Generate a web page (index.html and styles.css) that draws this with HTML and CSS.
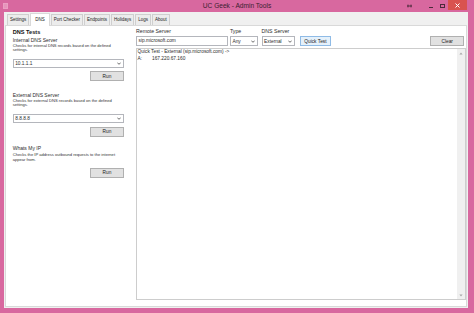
FILE: index.html
```html
<!DOCTYPE html>
<html lang="en">
<head>
    <meta charset="UTF-8">
    <title>UC Geek - Admin Tools</title>
    <link rel="stylesheet" href="styles.css">
</head>
<body>
<div class="window">
    <div class="titlebar">
        <span class="app-icon"></span>
        <span class="title">UC Geek - Admin Tools</span>
        <div class="controls">
            <span class="ctl pin">
                <svg width="5" height="4" viewBox="0 0 5 4"><path d="M0 2h5M1 0.6v2.8M4 0.6v2.8" stroke="#4a2a3a" stroke-width="0.9" fill="none"/></svg>
            </span>
            <span class="ctl min"><i></i></span>
            <span class="ctl max"><i></i></span>
            <span class="ctl close">
                <svg width="5" height="5" viewBox="0 0 5 5"><path d="M0.5 0.5l4 4M4.5 0.5l-4 4" stroke="#fff" stroke-width="1" fill="none"/></svg>
            </span>
        </div>
    </div>
    <div class="client">
        <div class="tabs">
            <span class="tab">Settings</span>
            <span class="tab active">DNS</span>
            <span class="tab">Port Checker</span>
            <span class="tab">Endpoints</span>
            <span class="tab">Holidays</span>
            <span class="tab">Logs</span>
            <span class="tab">About</span>
        </div>
        <div class="panel">
            <div class="left">
                <h3>DNS Tests</h3>
                <div class="group">
                    <h4>Internal DNS Server</h4>
                    <p>Checks for internal DNS records based on the defined settings.</p>
                    <div class="combo wide"><span>10.1.1.1</span><svg width="4" height="3" viewBox="0 0 4 3"><path d="M0.3 0.6l1.7 1.7 1.7-1.7" stroke="#444" stroke-width="0.8" fill="none"/></svg></div>
                    <button class="btn run">Run</button>
                </div>
                <div class="group second">
                    <h4>External DNS Server</h4>
                    <p>Checks for external DNS records based on the defined settings.</p>
                    <div class="combo wide"><span>8.8.8.8</span><svg width="4" height="3" viewBox="0 0 4 3"><path d="M0.3 0.6l1.7 1.7 1.7-1.7" stroke="#444" stroke-width="0.8" fill="none"/></svg></div>
                    <button class="btn run">Run</button>
                </div>
                <div class="group third">
                    <h4>Whats My IP</h4>
                    <p>Checks the IP address outbound requests to the internet appear from.</p>
                    <button class="btn run">Run</button>
                </div>
            </div>
            <div class="right">
                <div class="query">
                    <div class="field remote">
                        <label>Remote Server</label>
                        <div class="input">sip.microsoft.com</div>
                    </div>
                    <div class="field type">
                        <label>Type</label>
                        <div class="combo"><span>Any</span><svg width="4" height="3" viewBox="0 0 4 3"><path d="M0.3 0.6l1.7 1.7 1.7-1.7" stroke="#444" stroke-width="0.8" fill="none"/></svg></div>
                    </div>
                    <div class="field server">
                        <label>DNS Server</label>
                        <div class="combo"><span>External</span><svg width="4" height="3" viewBox="0 0 4 3"><path d="M0.3 0.6l1.7 1.7 1.7-1.7" stroke="#444" stroke-width="0.8" fill="none"/></svg></div>
                    </div>
                    <button class="btn quick">Quick Test</button>
                    <button class="btn clear">Clear</button>
                </div>
                <div class="output">
                    <div class="log">
                        <div>Quick Test - External (sip.microsoft.com) -&gt;</div>
                        <div><span class="rec">A:</span>167.220.67.160</div>
                    </div>
                    <div class="scroll">
                        <svg width="4" height="3" viewBox="0 0 4 3"><path d="M0.4 2.4l1.6-1.8 1.6 1.8z" fill="#a6a6a6"/></svg>
                        <svg width="4" height="3" viewBox="0 0 4 3"><path d="M0.4 0.6l1.6 1.8 1.6-1.8z" fill="#a6a6a6"/></svg>
                    </div>
                </div>
            </div>
        </div>
    </div>
</div>
</body>
</html>
```

FILE: styles.css
```css
* {
    margin: 0;
    padding: 0;
    box-sizing: border-box;
}

body {
    font-family: "Liberation Sans", Arial, sans-serif;
    color: #2b2b2b;
}

.window {
    width: 474px;
    height: 313px;
    background: #d8689f;
    display: flex;
    flex-direction: column;
}

/* title bar */
.titlebar {
    height: 12px;
    display: grid;
    grid-template-columns: 1fr auto 1fr;
    align-items: center;
}

.app-icon {
    width: 5px;
    height: 6px;
    margin-left: 3px;
    background: #e595bb;
    border: 1px solid #ec9fc3;
}

.title {
    font-size: 6.6px;
    line-height: 12px;
    color: #3b2130;
}

.controls {
    justify-self: end;
    align-self: start;
    display: flex;
    height: 11px;
    margin-right: 7px;
}

.ctl {
    display: flex;
    align-items: center;
    justify-content: center;
}

.pin {
    width: 5px;
    margin-right: 17px;
}

.min {
    width: 4px;
    margin-right: 7px;
}

.min i {
    display: block;
    width: 4px;
    height: 1px;
    margin-top: 3px;
    background: #4a2a3a;
}

.max {
    width: 5px;
    margin-right: 3px;
}

.max i {
    display: block;
    width: 5px;
    height: 4px;
    border: 1px solid #4a2a3a;
    border-top-width: 1.5px;
}

.close {
    width: 19px;
    height: 10px;
    background: #d9534f;
}

/* client area */
.client {
    flex: 1;
    margin: 0 6px 5px 4px;
    background: #f0f0f0;
    display: flex;
    flex-direction: column;
}

.tabs {
    height: 13px;
    display: flex;
    align-items: flex-end;
    padding-left: 3px;
}

.tab {
    height: 11px;
    line-height: 10px;
    font-size: 4.5px;
    padding: 0 2px;
    margin-right: 1px;
    border: 1px solid #cfcfcf;
    border-bottom: none;
    background: #ececec;
    color: #222;
}

.tab.active {
    height: 13px;
    line-height: 11px;
    padding: 0 4px;
    margin-bottom: -1px;
    background: #fff;
    border-color: #d9d9d9;
    position: relative;
}

.panel {
    flex: 1;
    margin: 0 1px 1px 1px;
    background: #fff;
    border: 1px solid #d9d9d9;
    display: flex;
}

/* left column */
.left {
    width: 118px;
    padding: 3px 0 0 6.7px;
}

.left h3 {
    font-size: 5.6px;
    line-height: 7px;
    color: #111;
}

.group {
    display: flex;
    flex-direction: column;
    margin-top: 0.8px;
}

.group.second {
    margin-top: 11px;
}

.group.third {
    margin-top: 8.5px;
}

.group h4 {
    font-size: 5px;
    font-weight: normal;
    line-height: 6px;
}

.group p {
    font-size: 4.1px;
    line-height: 4.3px;
    margin-top: 1px;
    color: #333;
}

.group.third p {
    margin-top: 2.3px;
}

.combo {
    height: 9px;
    border: 1px solid #b4b6bc;
    background: #fff;
    display: flex;
    align-items: center;
    justify-content: space-between;
    padding: 0 2px 0 1.5px;
    font-size: 4.8px;
}

.combo.wide {
    margin-top: 6.5px;
}

.btn {
    height: 10px;
    width: 34px;
    font-family: inherit;
    font-size: 4.8px;
    color: #222;
    background: #e1e1e1;
    border: 1px solid #b0b0b0;
}

.run {
    align-self: flex-end;
    margin-top: 3.3px;
}

.group.third .run {
    margin-top: 6px;
}

/* right column */
.right {
    flex: 1;
    margin-left: 12px;
    padding: 2px 0 6px 0;
    display: flex;
    flex-direction: column;
}

.query {
    display: flex;
    align-items: flex-end;
}

.field {
    display: flex;
    flex-direction: column;
}

.field label {
    font-size: 5.2px;
    line-height: 6px;
    margin-bottom: 2px;
}

.field .combo {
    height: 10px;
}

.remote {
    width: 91.6px;
    margin-right: 2.4px;
}

.type {
    width: 27.6px;
    margin-right: 4px;
}

.server {
    width: 33.4px;
    margin-right: 4.6px;
}

.input {
    height: 10px;
    border: 1px solid #b4b6bc;
    font-size: 4.8px;
    line-height: 8px;
    padding-left: 1.5px;
}

.quick {
    width: 31.7px;
    background: #e5f1fb;
    border-color: #8fbbe6;
}

.clear {
    width: 33.6px;
    margin-left: auto;
    margin-right: 2px;
}

.output {
    flex: 1;
    margin-top: 2.3px;
    border: 1px solid #cdcdcd;
    display: flex;
}

.log {
    flex: 1;
    padding-left: 0.6px;
    font-size: 4.8px;
    line-height: 6.7px;
}

.rec {
    display: inline-block;
    width: 14.4px;
}

.scroll {
    width: 8.5px;
    background: #f0f0f0;
    display: flex;
    flex-direction: column;
    align-items: center;
    justify-content: space-between;
    padding: 2.5px 0;
}
```
